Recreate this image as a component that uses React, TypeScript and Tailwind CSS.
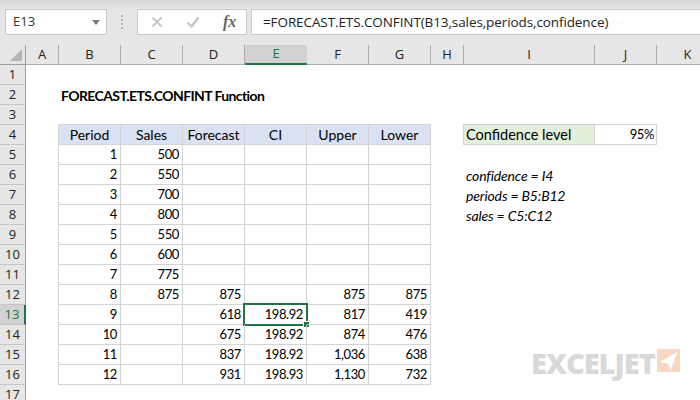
import React from "react";

const cols = ["A", "B", "C", "D", "E", "F", "G", "H", "I", "J", "K"];
const widths = ["w-[33px]", "w-[62px]", "w-[62px]", "w-[62px]", "w-[62px]", "w-[62px]", "w-[62px]", "w-[33px]", "w-[131px]", "w-[62px]", "w-[62px]"];

const data: (string | number)[][] = [
  [1, 500, "", "", "", ""],
  [2, 550, "", "", "", ""],
  [3, 700, "", "", "", ""],
  [4, 800, "", "", "", ""],
  [5, 550, "", "", "", ""],
  [6, 600, "", "", "", ""],
  [7, 775, "", "", "", ""],
  [8, 875, 875, "", 875, 875],
  [9, "", 618, "198.92", 817, 419],
  [10, "", 675, "198.92", 874, 476],
  [11, "", 837, "198.92", "1,036", 638],
  [12, "", 931, "198.93", "1,130", 732],
];
const heads = ["Period", "Sales", "Forecast", "CI", "Upper", "Lower"];
const notes: Record<number, string> = { 1: "confidence = I4", 2: "periods = B5:B12", 3: "sales = C5:C12" };

function RowHead({ n }: { n: number }) {
  const active = n === 13;
  return (
    <div
      className={`w-[26px] h-[20px] shrink-0 flex items-center justify-center border-b border-[#c6c6c6] text-[13px] font-['Open_Sans',sans-serif] ${
        active ? "bg-[#d2d2d2] text-[#217346] border-r-2 border-r-[#217346]" : "bg-[#e6e6e6] text-[#222] border-r border-r-[#9f9f9f]"
      }`}
    >
      {n}
    </div>
  );
}

function Row({ n, children }: { n: number; children?: React.ReactNode }) {
  return (
    <div className="flex h-[20px]">
      <RowHead n={n} />
      {children}
    </div>
  );
}

function TableCell({ v, first, selected }: { v: string | number; first?: boolean; selected?: boolean }) {
  return (
    <div
      className={`relative ${first ? "w-[63px] border-l" : "w-[62px]"} h-[20px] shrink-0 flex items-center justify-end pr-[3px] border-r border-b border-[#d4d4d4] text-[13px] tracking-[-0.4px]`}
    >
      {v}
      {selected && (
        <div className="absolute left-[-2px] top-[-2px] w-[65px] h-[23px] border-2 border-[#217346]">
          <div className="absolute right-[-3px] bottom-[-3px] w-[6px] h-[6px] bg-[#217346] border-l border-t border-white" />
        </div>
      )}
    </div>
  );
}

export default function App() {
  return (
    <div className="relative w-[700px] h-[400px] overflow-hidden bg-white text-black font-['Lato','Carlito',sans-serif] text-[14px]">
      {/* formula bar */}
      <div className="h-[45px] bg-gradient-to-b from-[#d8d8d8] to-[#e6e6e6] to-[20%] flex items-start pt-[9px] pl-[5px] font-['Open_Sans',sans-serif] text-[13px] text-[#333]">
        <div className="w-[102px] h-[26px] bg-white border border-[#c8c8c8] flex items-center justify-between pl-[7px] pr-[6px]">
          <span>E13</span>
          <svg width="8" height="5" viewBox="0 0 8 5"><path d="M0 0h8L4 5z" fill="#7a7a7a" /></svg>
        </div>
        <div className="w-[30px] h-[26px] flex flex-col items-center justify-center gap-[2px]">
          <span className="w-[2px] h-[2px] bg-[#b4b4b4]" />
          <span className="w-[2px] h-[2px] bg-[#b4b4b4]" />
          <span className="w-[2px] h-[2px] bg-[#b4b4b4]" />
          <span className="w-[2px] h-[2px] bg-[#b4b4b4]" />
        </div>
        <div className="w-[110px] h-[26px] bg-white border border-[#c8c8c8] flex items-center">
          <svg className="ml-[13px]" width="12" height="12" viewBox="0 0 12 12"><path d="M1.5 1.5l9 9M10.5 1.5l-9 9" stroke="#c6c6c6" strokeWidth="2" fill="none" /></svg>
          <svg className="ml-[23px]" width="14" height="12" viewBox="0 0 14 12"><path d="M1.5 6.5l4 4 7-9" stroke="#c6c6c6" strokeWidth="2.4" fill="none" /></svg>
          <span className="ml-[23px] font-['Liberation_Serif',serif] italic font-bold text-[16px] leading-none text-[#666]">fx</span>
        </div>
        <div className="ml-[4px] flex-1 h-[26px] bg-white border-y border-l border-[#c8c8c8] flex items-center pl-[11px] text-[#222] text-[13.5px] font-['Open_Sans',sans-serif] tracking-[-0.1px]">
          =FORECAST.ETS.CONFINT(B13,sales,periods,confidence)
        </div>
      </div>

      {/* column headers */}
      <div className="flex h-[20px] bg-[#e6e6e6] font-['Open_Sans',sans-serif] text-[13px] text-[#222]">
        <div className="w-[26px] h-[20px] shrink-0 flex items-end justify-end pr-[3px] pb-[3px] border-r border-[#9f9f9f] border-b border-b-[#9f9f9f]">
          <svg width="12" height="12" viewBox="0 0 12 12"><path d="M12 0v12H0z" fill="#b4b4b4" /></svg>
        </div>
        {cols.map((c, i) => (
          <div
            key={c}
            className={`${widths[i]} h-[20px] shrink-0 flex items-center justify-center ${
              c === "E" ? "bg-[#d2d2d2] text-[#217346] border-b-2 border-[#217346]" : "border-r border-b border-[#ababab]"
            }`}
          >
            {c}
          </div>
        ))}
      </div>

      {/* sheet */}
      <div className="flex flex-col">
        <Row n={1} />
        <Row n={2}>
          <div className="w-[33px] shrink-0" />
          <div className="pl-[2px] flex items-center font-bold text-[14px] tracking-[-0.6px] whitespace-nowrap">FORECAST.ETS.CONFINT Function</div>
        </Row>
        <Row n={3}>
          <div className="w-[32px] shrink-0" />
          <div className="w-[373px] h-[20px] shrink-0 border-b border-[#d4d4d4]" />
          <div className="w-[32px] shrink-0" />
          <div className="w-[194px] h-[20px] shrink-0 border-b border-[#d4d4d4]" />
        </Row>
        <Row n={4}>
          <div className="w-[32px] shrink-0" />
          {heads.map((h, i) => (
            <div
              key={h}
              className={`${i === 0 ? "w-[63px] border-l" : "w-[62px]"} h-[20px] shrink-0 flex items-center justify-center bg-[#d9e1f2] border-r border-b border-[#d4d4d4]`}
            >
              {h}
            </div>
          ))}
          <div className="w-[32px] shrink-0" />
          <div className="w-[132px] h-[20px] shrink-0 flex items-center pl-[2px] bg-[#e2efda] border-l border-r border-b border-[#d4d4d4] text-[14.5px]">Confidence level</div>
          <div className="w-[62px] h-[20px] shrink-0 flex items-center justify-end pr-[2px] border-r border-b border-[#d4d4d4] text-[13px] tracking-[-0.4px]">95%</div>
        </Row>
        {data.map((r, ri) => (
          <Row key={ri} n={ri + 5}>
            <div className="w-[32px] shrink-0" />
            {r.map((v, ci) => (
              <TableCell key={ci} v={v} first={ci === 0} selected={ri === 8 && ci === 3} />
            ))}
            {notes[ri] && (
              <div className="ml-[35px] flex items-center italic text-[14px] tracking-[-0.15px] whitespace-nowrap">{notes[ri]}</div>
            )}
          </Row>
        ))}
        <Row n={17} />
      </div>

      {/* watermark logo */}
      <div className="absolute left-[531px] top-[344px] flex items-start">
        <span className="font-['Open_Sans',sans-serif] font-extrabold text-[29px] leading-[38px] tracking-[-1px] text-[#d9d9d9]">EXCELJET</span>
        <svg className="ml-[2px] mt-[5px]" width="23" height="23" viewBox="0 0 23 23">
          <rect width="23" height="23" fill="#f8d8c0" />
          <path d="M20 3L3 13l8 1.5L14 21z" fill="#fff" />
        </svg>
      </div>
    </div>
  );
}
